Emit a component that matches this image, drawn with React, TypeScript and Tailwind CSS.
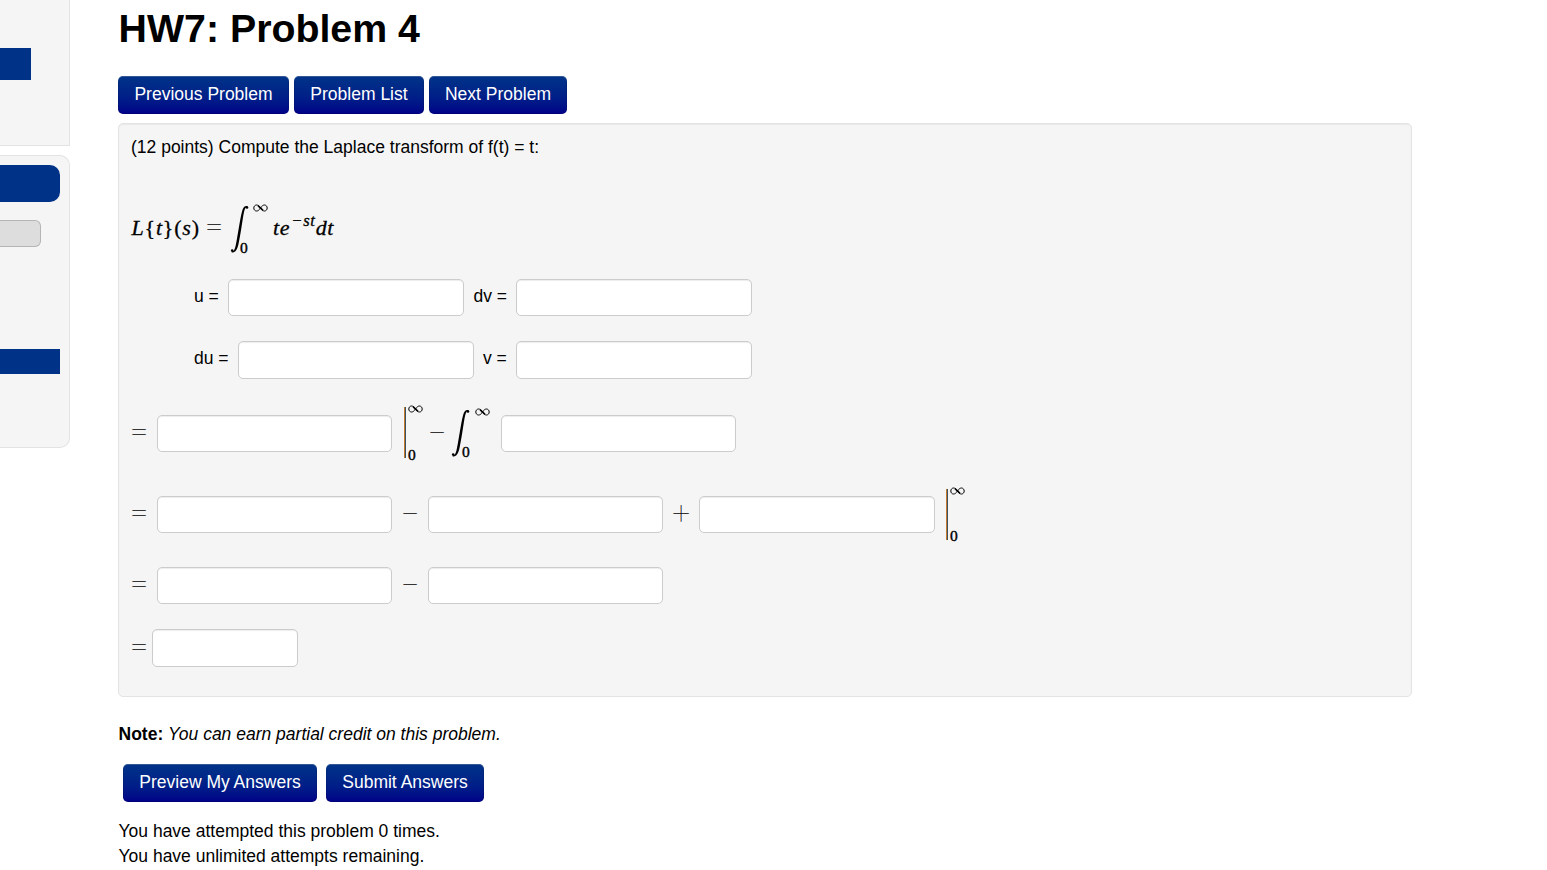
import type { ReactNode } from "react";
import clsx from "clsx";

function NavButton({ children, className }: { children: ReactNode; className: string }) {
  return (
    <button
      className={clsx(
        "h-[38px] shrink-0 whitespace-nowrap rounded-[5px] bg-linear-to-b from-[#003388] to-[#000088] pb-[2px] text-center text-[17.5px] text-white shadow-[inset_0_1px_0_rgba(255,255,255,0.2),inset_0_0_0_1px_rgba(0,0,0,0.1)]",
        className
      )}
    >
      {children}
    </button>
  );
}

function Answer({ className }: { className: string }) {
  return (
    <input
      type="text"
      className={clsx(
        "shrink-0 rounded-[5px] border border-[#cccccc] bg-white px-2 shadow-[inset_0_1px_1px_rgba(0,0,0,0.075)] outline-none",
        className
      )}
    />
  );
}

function Op({ children, className }: { children: ReactNode; className: string }) {
  return (
    <span
      className={clsx(
        "flex shrink-0 justify-center pb-[5px] font-['Lato',sans-serif] text-[33px] font-thin leading-[24px] [-webkit-text-stroke:0.3px_black]",
        className
      )}
    >
      {children}
    </span>
  );
}

function Limits({ className, gap }: { className: string; gap: string }) {
  return (
    <span
      className={clsx(
        "flex shrink-0 flex-col justify-between font-['Liberation_Serif',serif] text-[15.5px] leading-[12px] [-webkit-text-stroke:0.4px_black]",
        className
      )}
    >
      <span className={gap}>
        <Infinity />
      </span>
      <span>0</span>
    </span>
  );
}

function Infinity() {
  return (
    <svg width="15" height="8" viewBox="0 0 15 8" fill="none" stroke="black" className="block" aria-label="∞">
      <path d="M7.5 4C6 1.8 4.9 1 3.5 1S.8 2.3.8 4s1.2 3 2.7 3S6 6.2 7.5 4" strokeWidth="1" />
      <path d="M7.5 4C9 1.8 10.1 1 11.5 1s2.7 1.3 2.7 3-1.2 3-2.7 3S9 6.2 7.5 4" strokeWidth="1" />
      <path d="M5 1.6 10 6.4" strokeWidth="1.5" />
    </svg>
  );
}

function Integral() {
  return (
    <svg width="20" height="48" viewBox="0 0 20 48" fill="black" className="shrink-0" aria-label="∫">
      <circle cx="2.2" cy="45.6" r="1.3" />
      <circle cx="17" cy="2.5" r="1.3" />
      <path d="M18 1.8C16.5.2 14 .8 12.6 4.5 11 9 8.7 24 7.1 33 5.7 41 4.8 46.6 2.3 46.2L1.5 47.2C5 48.3 7 45 8.3 40 10 33 12.2 17 13.6 9 14.6 4 15.5 1.8 17.2 2.4z" />
    </svg>
  );
}

function Bar() {
  return <span className="h-[51px] w-[2px] shrink-0 border-l border-r border-l-[#c47a2c] border-r-[#3a5261]" />;
}

function Sidebar() {
  return (
    <aside className="flex w-[70px] shrink-0 flex-col gap-[9px]">
      <div className="h-[146px] border-b border-r border-[#e3e3e3] bg-[#f5f5f5] pt-[48px]">
        <div className="h-8 w-[31px] bg-[#003388]" />
      </div>
      <div className="h-[293px] rounded-r-[10px] border border-l-0 border-[#e3e3e3] bg-[#f5f5f5] pt-[9px]">
        <div className="h-[37px] w-[60px] rounded-r-[10px] bg-[#003388]" />
        <div className="mt-[18px] h-[27px] w-[41px] rounded-r-[6px] border border-l-0 border-[#b5b5b5] bg-[#dddddd]" />
        <div className="mt-[102px] h-[25px] w-[60px] bg-[#003388]" />
      </div>
    </aside>
  );
}

export default function App() {
  return (
    <div className="flex h-[870px] w-full overflow-hidden bg-white font-['Liberation_Sans',Arial,sans-serif] text-[17.5px] leading-[25px] text-black">
      <Sidebar />

      <main className="ml-[48px] w-[1294px] shrink-0">
        <h1 className="pl-[0.6px] pt-[3px] text-[39.3px] font-bold leading-[50px]">HW7: Problem 4</h1>

        <div className="mt-[23px] flex gap-[5px]">
          <NavButton className="w-[171px]">Previous Problem</NavButton>
          <NavButton className="w-[130px]">Problem List</NavButton>
          <NavButton className="w-[138px]">Next Problem</NavButton>
        </div>

        <section className="mt-[9px] h-[574px] rounded-[5px] border border-[#e3e3e3] bg-[#f5f5f5] pl-3 pt-[11px] shadow-[inset_0_1px_1px_rgba(0,0,0,0.05)]">
          <p>(12 points) Compute the Laplace transform of f(t) = t:</p>

          {/* L{t}(s) = integral */}
          <div className="mt-[43px] flex h-[51px] items-center font-['Liberation_Serif',serif] text-[22px] [-webkit-text-stroke:0.3px_black]">
            <span className="w-[69px] whitespace-nowrap pb-[3px] pl-[0.5px] tracking-[0.8px]">
              <i>L</i>
              {"{"}
              <i>t</i>
              {"}"}(<i>s</i>)
            </span>
            <Op className="ml-[6px] w-[16px]">=</Op>
            <span className="ml-[8px] flex">
              <Integral />
            </span>
            <Limits className="-ml-[10px] h-[50px] w-[28px]" gap="ml-[13px]" />
            <span className="ml-[5px] flex whitespace-nowrap pb-[3px] italic tracking-[0.7px]">
              te
              <span className="-mt-[7px] ml-[1px] text-[16.5px] tracking-[0.4px]">
                <span className="mr-[0.5px]">−</span>st
              </span>
              <span className="ml-[0.5px]">dt</span>
            </span>
          </div>

          {/* Integration by parts */}
          <div className="ml-[63px] mt-[25px] flex h-[37px] items-center">
            <span className="w-[34px] pb-[2px]">u =</span>
            <Answer className="h-[37px] w-[236px]" />
            <span className="ml-[9.5px] w-[42.5px] pb-[2px]">dv =</span>
            <Answer className="h-[37px] w-[236px]" />
          </div>
          <div className="ml-[63px] mt-[25px] flex h-[38px] items-center">
            <span className="w-[44px] pb-[3px]">du =</span>
            <Answer className="h-[38px] w-[236px]" />
            <span className="ml-[9px] w-[33px] pb-[3px]">v =</span>
            <Answer className="h-[38px] w-[236px]" />
          </div>

          <div className="mt-[26px] flex h-[57px] items-center">
            <Op className="w-[16px]">=</Op>
            <Answer className="ml-[10px] h-[37px] w-[235px]" />
            <span className="ml-[12px] flex pb-[2px]">
              <Bar />
            </span>
            <Limits className="ml-[2px] h-[55px] w-[15px]" gap="-mt-[1px]" />
            <Op className="ml-[6px] w-[16px]">−</Op>
            <span className="ml-[6px] flex pb-[2px]">
              <Integral />
            </span>
            <Limits className="-ml-[9px] h-[51px] w-[29px] pb-[1px]" gap="ml-[13px]" />
            <Answer className="ml-[10px] h-[37px] w-[235px]" />
          </div>

          <div className="mt-[24px] flex h-[57px] items-center">
            <Op className="w-[16px]">=</Op>
            <Answer className="ml-[10px] h-[37px] w-[235px]" />
            <Op className="w-[36px]">−</Op>
            <Answer className="h-[37px] w-[235px]" />
            <Op className="w-[36px]">+</Op>
            <Answer className="h-[37px] w-[236px]" />
            <span className="ml-[11px] flex">
              <Bar />
            </span>
            <Limits className="ml-[2px] h-[55px] w-[15px]" gap="mt-0" />
          </div>

          <div className="mt-[24px] flex h-[37px] items-center">
            <Op className="w-[16px]">=</Op>
            <Answer className="ml-[10px] h-[37px] w-[235px]" />
            <Op className="w-[36px]">−</Op>
            <Answer className="h-[37px] w-[235px]" />
          </div>

          <div className="mt-[25px] flex h-[38px] items-center">
            <Op className="w-[16px]">=</Op>
            <Answer className="ml-[5px] h-[38px] w-[146px]" />
          </div>
        </section>

        <p className="mt-[25px] pl-[0.5px]">
          <b>Note:</b> <i>You can earn partial credit on this problem.</i>
        </p>

        <div className="ml-[5px] mt-[17px] flex gap-[9px]">
          <NavButton className="w-[194px]">Preview My Answers</NavButton>
          <NavButton className="w-[158px]">Submit Answers</NavButton>
        </div>

        <p className="mt-[17px] pl-[0.5px]">
          You have attempted this problem 0 times.
          <br />
          You have unlimited attempts remaining.
        </p>
      </main>
    </div>
  );
}
